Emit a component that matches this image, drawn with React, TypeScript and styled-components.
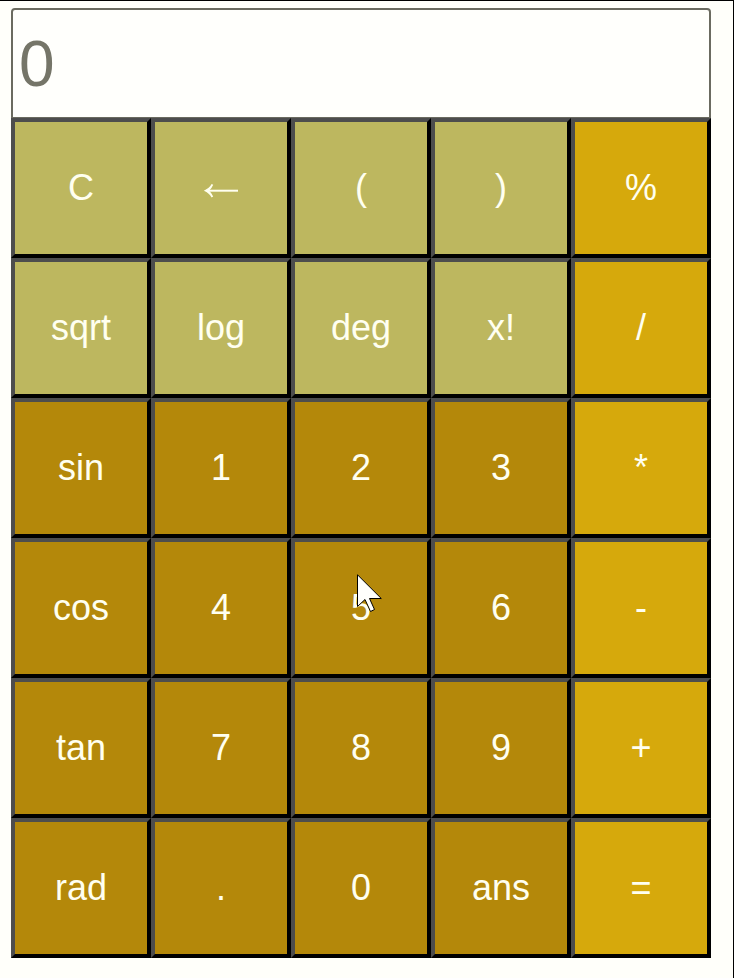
import React, { useState } from 'react';
import styled, { createGlobalStyle } from 'styled-components';

const GlobalStyle = createGlobalStyle`
  * { box-sizing: border-box; }
  body {
    margin: 0;
    background: #fffffa;
    font-family: "Liberation Sans", Arial, sans-serif;
  }
`;

const Page = styled.main`
  min-height: 100vh;
  padding: 7px 22px 20px 11px;
  border-top: 1px solid #000;
  border-right: 1px solid #000;
`;

const Display = styled.input`
  display: block;
  width: 100%;
  height: 110px;
  padding: 0 6px;
  border: 2px solid #6b6b60;
  border-bottom-width: 1px;
  border-radius: 4px 4px 0 0;
  background: #fffffc;
  color: #333;
  font-family: inherit;
  font-size: 64px;
  outline: none;

  &::placeholder {
    color: #757568;
    opacity: 1;
  }
`;

const Keypad = styled.div`
  display: grid;
  grid-template-columns: repeat(5, 1fr);
`;

type Tone = 'khaki' | 'gold' | 'dark';

const tones: Record<Tone, string> = {
  khaki: '#bdb75f',
  gold: '#d6a90c',
  dark: '#b4880a',
};

const Key = styled.button<{ $tone: Tone }>`
  position: relative;
  aspect-ratio: 1;
  min-width: 0;
  padding: 0;
  border: 4px solid;
  border-color: #4d4d4d #000 #000 #4d4d4d;
  border-radius: 0;
  background: ${({ $tone }) => tones[$tone]};
  color: #fffff0;
  font-family: inherit;
  font-size: 36px;
  line-height: 40px;
`;

const ArrowIcon = styled.svg`
  display: block;
  margin: 0 auto;
`;

const BackArrow = () => (
  <ArrowIcon width="36" height="36" viewBox="0 0 36 36" aria-hidden="true">
    <path d="M3 20.7H35" fill="none" stroke="currentColor" strokeWidth="2" />
    <path
      d="M0.8 20.7Q6.5 18.2 8.6 14L10.2 14.8Q8.8 18.5 6 20.7Q8.8 22.9 10.2 26.6L8.6 27.4Q6.5 23.2 0.8 20.7Z"
      fill="currentColor"
    />
  </ArrowIcon>
);

const Pointer = styled.svg`
  position: absolute;
  top: 32px;
  left: 62px;
  pointer-events: none;
`;

const MousePointer = () => (
  <Pointer width="26" height="39" viewBox="0 0 26 39" aria-hidden="true">
    <path
      d="M0.5 0.8V32.5L8 25.5L13.5 37.5L17.5 35.5L12.5 24.5H24.3Z"
      fill="#fffffc"
      stroke="#000"
      strokeWidth="1"
    />
  </Pointer>
);

const rows: [string, Tone][][] = [
  [['C', 'khaki'], ['←', 'khaki'], ['(', 'khaki'], [')', 'khaki'], ['%', 'gold']],
  [['sqrt', 'khaki'], ['log', 'khaki'], ['deg', 'khaki'], ['x!', 'khaki'], ['/', 'gold']],
  [['sin', 'dark'], ['1', 'dark'], ['2', 'dark'], ['3', 'dark'], ['*', 'gold']],
  [['cos', 'dark'], ['4', 'dark'], ['5', 'dark'], ['6', 'dark'], ['-', 'gold']],
  [['tan', 'dark'], ['7', 'dark'], ['8', 'dark'], ['9', 'dark'], ['+', 'gold']],
  [['rad', 'dark'], ['.', 'dark'], ['0', 'dark'], ['ans', 'dark'], ['=', 'gold']],
];

export default function App() {
  const [value, setValue] = useState('');

  const press = (label: string) => {
    if (label === 'C') setValue('');
    else if (label === '←') setValue((v) => v.slice(0, -1));
    else if (/^[\d.()%/*+-]$/.test(label)) setValue((v) => v + label);
  };

  return (
    <>
      <GlobalStyle />
      <Page>
        <Display
          type="text"
          aria-label="Calculator display"
          placeholder="0"
          value={value}
          onChange={(e) => setValue(e.target.value)}
        />
        <Keypad>
          {rows.flat().map(([label, tone]) => (
            <Key
              key={label}
              type="button"
              $tone={tone}
              aria-label={label === '←' ? 'Backspace' : undefined}
              onClick={() => press(label)}
            >
              {label === '←' ? <BackArrow /> : label}
              {label === '5' && <MousePointer />}
            </Key>
          ))}
        </Keypad>
      </Page>
    </>
  );
}
